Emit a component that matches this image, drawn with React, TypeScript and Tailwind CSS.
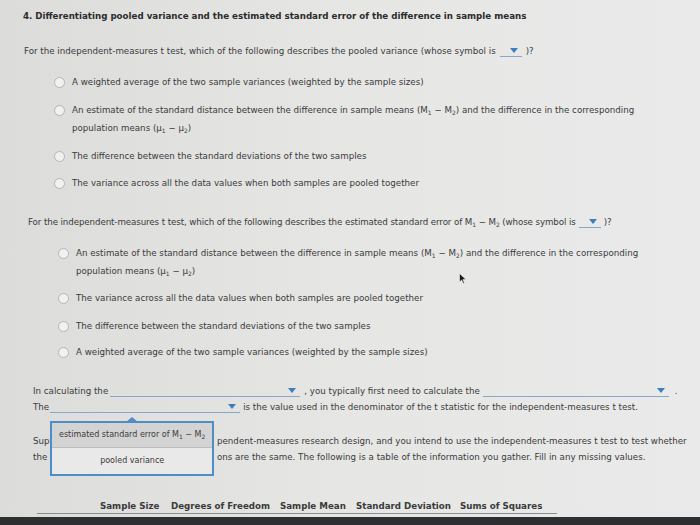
import type { ReactNode } from 'react'

const font = { fontFamily: '"DejaVu Sans", Verdana, sans-serif' }

function Arrow() {
  return (
    <svg width="8" height="5" viewBox="0 0 8 5" className="shrink-0">
      <path d="M0 0 L8 0 L4 5 Z" fill="#3d7ebf" />
    </svg>
  )
}

function Drop({ w, className = '', children }: { w: string; className?: string; children?: ReactNode }) {
  return (
    <span className={`relative inline-flex h-[12px] shrink-0 items-center justify-end border-b border-[#86a9c8] pr-[4px] align-top ${w} ${className}`}>
      <Arrow />
      {children}
    </span>
  )
}

function Radio() {
  return <span className="inline-block h-[11px] w-[11px] shrink-0 rounded-full border border-[#b5b5b5] bg-[#f1f1f1]" />
}

function Option({ children, two = false, className = '' }: { children: ReactNode; two?: boolean; className?: string }) {
  return (
    <div className={`flex items-start gap-[7px] ${two ? 'h-[36px] leading-[18px]' : 'h-[12px] leading-[12px]'} ${className}`}>
      <span className={two ? 'mt-[3px]' : 'mt-[0.5px]'}>
        <Radio />
      </span>
      <div>{children}</div>
    </div>
  )
}

const Sub = ({ children }: { children: ReactNode }) => <sub className="text-[6px] leading-none">{children}</sub>

const M12 = (
  <>
    M<Sub>1</Sub> − M<Sub>2</Sub>
  </>
)
const MU12 = (
  <>
    (μ<Sub>1</Sub> − μ<Sub>2</Sub>)
  </>
)

export default function App() {
  return (
    <div
      className="relative flex h-[525px] w-[700px] flex-col overflow-hidden bg-gradient-to-r from-[#dcdcdb] via-[#e6e6e5] to-[#eaeaea] text-[8.7px] text-[#3a3a3a]"
      style={font}
    >
      <div className="flex-1">
        {/* Title */}
        <div className="ml-[23px] mt-[10px] h-[12px] font-bold leading-[12px] text-[#2b2b2b]">
          4. Differentiating pooled variance and the estimated standard error of the difference in sample means
        </div>

        {/* Question 1 */}
        <div className="ml-[24px] mt-[23px] h-[12px] leading-[12px]">
          For the independent-measures t test, which of the following describes the pooled variance (whose symbol is
          <Drop w="w-[22px]" className="mx-[4px]" />
          )?
        </div>
        <div className="ml-[54px]">
          <Option className="mt-[19px]">A weighted average of the two sample variances (weighted by the sample sizes)</Option>
          <Option two className="mt-[13px]">
            An estimate of the standard distance between the difference in sample means ({M12}) and the difference in the corresponding
            <br />
            population means {MU12}
          </Option>
          <Option className="mt-[13px]">The difference between the standard deviations of the two samples</Option>
          <Option className="mt-[15px]">The variance across all the data values when both samples are pooled together</Option>
        </div>

        {/* Question 2 */}
        <div className="ml-[28px] mt-[27px] h-[12px] tracking-[-0.1px] leading-[12px]">
          For the independent-measures t test, which of the following describes the estimated standard error of {M12} (whose symbol is
          <Drop w="w-[22px]" className="mx-[3px]" />
          )?
        </div>
        <div className="ml-[58px]">
          <Option two className="mt-[16px]">
            An estimate of the standard distance between the difference in sample means ({M12}) and the difference in the corresponding
            <br />
            population means {MU12}
          </Option>
          <Option className="mt-[12px]">The variance across all the data values when both samples are pooled together</Option>
          <Option className="mt-[16px]">The difference between the standard deviations of the two samples</Option>
          <Option className="mt-[14px]">A weighted average of the two sample variances (weighted by the sample sizes)</Option>
        </div>

        {/* Fill in */}
        <div className="ml-[33px] mt-[27px] flex h-[12px] items-start whitespace-nowrap leading-[12px]">
          <span>In calculating the</span>
          <Drop w="w-[190px]" className="ml-[2px]" />
          <span className="ml-[4px]">, you typically first need to calculate the</span>
          <Drop w="w-[186px]" className="ml-[3px]" />
          <span className="ml-[6px]">.</span>
        </div>
        <div className="ml-[33px] mt-[4px] flex h-[12px] items-start whitespace-nowrap leading-[12px]">
          <span>The</span>
          <Drop w="w-[190px]" className="ml-[1px]">
            {/* open menu */}
            <div className="absolute left-[0px] top-[20px] z-10 w-[164px] whitespace-nowrap">
              <svg width="12" height="5" viewBox="0 0 12 5" className="absolute -top-[4px] left-[76px]">
                <path d="M0 5 L6 0 L12 5 Z" fill="#4d8ec6" />
              </svg>
              <div className="border-2 border-[#4d8ec6] bg-[#e9e9e9] text-center text-[8px] leading-[12px] text-[#3a3a3a]">
                <div className="border-b border-[#bdbdbd] bg-[#d3d3d3] py-[6px]">estimated standard error of {M12}</div>
                <div className="py-[7px]">pooled variance</div>
              </div>
            </div>
          </Drop>
          <span className="ml-[3px]">is the value used in the denominator of the t statistic for the independent-measures t test.</span>
        </div>

        {/* partly hidden behind the open menu */}
        <div className="ml-[33px] mt-[20px] whitespace-nowrap leading-[16px]">
          <div className="flex h-[16px]">
            <span className="w-[184px]">Sup</span>
            <span>pendent-measures research design, and you intend to use the independent-measures t test to test whether</span>
          </div>
          <div className="flex h-[16px]">
            <span className="w-[184px]">the</span>
            <span>ons are the same. The following is a table of the information you gather. Fill in any missing values.</span>
          </div>
        </div>

        {/* Table header */}
        <div className="ml-[37px] mt-[35px] w-[520px] border-b border-[#8c8c8c] pb-[1px]">
          <div className="flex h-[12px] whitespace-nowrap font-bold leading-[12px] text-[#3a3a3a]">
            <span className="ml-[63px] w-[71px]">Sample Size</span>
            <span className="w-[109px]">Degrees of Freedom</span>
            <span className="w-[76px]">Sample Mean</span>
            <span className="w-[104px]">Standard Deviation</span>
            <span>Sums of Squares</span>
          </div>
        </div>
      </div>

      {/* mouse pointer */}
      <svg width="8" height="11" viewBox="0 0 8 11" className="absolute left-[459px] top-[273px]">
        <path d="M0.5 0.5 L0.5 9 L2.6 7 L4.2 10.5 L5.4 10 L3.9 6.6 L7 6.6 Z" fill="#1b1b1b" stroke="#f0f0f0" strokeWidth="0.6" />
      </svg>

      <div className="h-[8px] bg-[#2d2f31]" />
    </div>
  )
}
